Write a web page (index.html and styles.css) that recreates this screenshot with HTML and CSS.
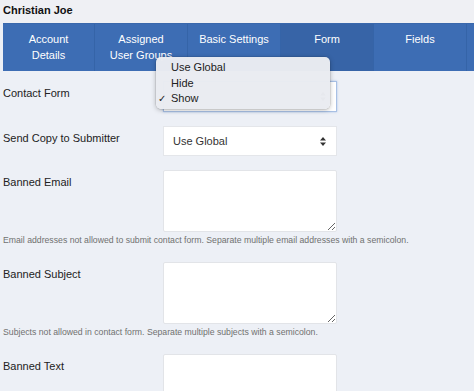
FILE: index.html
```html
<!DOCTYPE html>
<html>
<head>
<meta charset="utf-8">
<link rel="stylesheet" href="styles.css">
</head>
<body>
<div class="page">
  <div class="title">Christian Joe</div>
  <nav class="tabs">
    <div class="tab first">Account<br>Details</div>
    <div class="tab">Assigned<br>User Groups</div>
    <div class="tab">Basic Settings</div>
    <div class="tab active">Form</div>
    <div class="tab">Fields</div>
    <div class="tab"></div>
  </nav>
  <div class="form">
    <div class="row">
      <label class="label">Contact Form</label>
      <div class="field">
        <div class="select focus"><span class="arrows"><svg width="6" height="9" viewBox="0 0 6 9"><path d="M3 0L6 3.5H0Z M3 9L0 5.5H6Z" fill="#333"/></svg></span></div>
      </div>
    </div>
    <div class="row">
      <label class="label">Send Copy to Submitter</label>
      <div class="field">
        <div class="select">Use Global<span class="arrows"><svg width="6" height="9" viewBox="0 0 6 9"><path d="M3 0L6 3.5H0Z M3 9L0 5.5H6Z" fill="#333"/></svg></span></div>
      </div>
    </div>
    <div class="row">
      <label class="label">Banned Email</label>
      <div class="field"><textarea class="area"></textarea></div>
    </div>
    <p class="help">Email addresses not allowed to submit contact form. Separate multiple email addresses with a semicolon.</p>
    <div class="row">
      <label class="label">Banned Subject</label>
      <div class="field"><textarea class="area"></textarea></div>
    </div>
    <p class="help">Subjects not allowed in contact form. Separate multiple subjects with a semicolon.</p>
    <div class="row">
      <label class="label">Banned Text</label>
      <div class="field"><textarea class="area"></textarea></div>
    </div>
  </div>
  <ul class="menu">
    <li>Use Global</li>
    <li>Hide</li>
    <li class="checked"><span class="check">✓</span>Show</li>
  </ul>
</div>
</body>
</html>
```
FILE: styles.css
```css
html, body {
  margin: 0;
  padding: 0;
  background: #edf0f6;
  font-family: "Liberation Sans", Arial, sans-serif;
  overflow: hidden;
}
.page {
  position: relative;
  padding-left: 3px;
  height: 391px;
  overflow: hidden;
}
.title {
  font-size: 11px;
  font-weight: bold;
  color: #111;
  height: 23px;
  line-height: 13px;
  padding-top: 4px;
  box-sizing: border-box;
  background: #eff0f4;
  margin-left: -3px;
  padding-left: 3px;
}
.tabs {
  display: flex;
  height: 48px;
  background: #3d6db4;
  border-top: 1px solid #3a68ac;
  box-sizing: border-box;
  overflow: hidden;
}
.tab {
  flex: 0 0 93px;
  box-sizing: border-box;
  border-left: 1px solid #3564a8;
  color: #fff;
  font-size: 11px;
  line-height: 16px;
  text-align: center;
  padding-top: 7px;
}
.tab.first {
  flex-basis: 91px;
  border-left: none;
}
.tab.active {
  background: #3764a7;
}
.form {
  padding-top: 10px;
}
.row {
  display: grid;
  grid-template-columns: 160px 174px;
}
.row + .row {
  margin-top: 14px;
}
.label {
  font-size: 11px;
  color: #222;
  line-height: 13px;
  padding-top: 6px;
}
.select {
  position: relative;
  height: 30px;
  box-sizing: border-box;
  background: #fff;
  border: 1px solid #e4e6ea;
  font-size: 11px;
  color: #333;
  line-height: 28px;
  padding-left: 9px;
}
.select.focus {
  height: 31px;
  border-color: #a8c0e4;
  box-shadow: 0 0 2px rgba(102, 150, 220, 0.5);
}
.arrows {
  position: absolute;
  right: 10px;
  top: 10px;
  line-height: 0;
}
.area {
  display: block;
  width: 174px;
  height: 62px;
  box-sizing: border-box;
  border: 1px solid #e2e4e8;
  background: #fff;
  border-radius: 2px;
  margin: 0;
  font: inherit;
}
.help {
  margin: 3px 0 0 0;
  font-size: 8.7px;
  line-height: 11px;
  color: #707070;
  height: 27px;
}
.help + .row {
  margin-top: 0;
}
.menu {
  position: absolute;
  left: 156px;
  top: 57px;
  width: 174px;
  height: 52px;
  box-sizing: border-box;
  margin: 0;
  padding: 3px 0 0 0;
  list-style: none;
  background: rgba(234, 236, 241, 0.98);
  border-radius: 5px;
  box-shadow: 0 1px 5px rgba(0, 0, 0, 0.28), 0 0 0 0.5px rgba(0, 0, 0, 0.12);
}
.menu li {
  position: relative;
  font-size: 11px;
  line-height: 15.5px;
  color: #222;
  padding-left: 15px;
}
.check {
  position: absolute;
  left: 2px;
  top: 0;
  font-size: 10px;
}
```
